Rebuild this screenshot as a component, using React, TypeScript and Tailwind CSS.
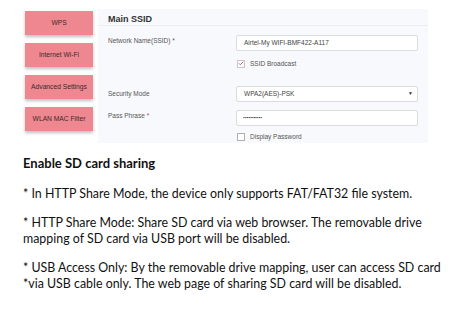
import { Check } from 'lucide-react';

const menu = ['WPS', 'Internet Wi-Fi', 'Advanced Settings', 'WLAN MAC Filter'];

const notes = [
  ['* In HTTP Share Mode, the device only supports FAT/FAT32 file system.'],
  [
    '* HTTP Share Mode: Share SD card via web browser. The removable drive',
    'mapping of SD card via USB port will be disabled.',
  ],
  [
    '* USB Access Only: By the removable drive mapping, user can access SD card',
    '*via USB cable only. The web page of sharing SD card will be disabled.',
  ],
];

export default function App() {
  return (
    <div className="w-[474px] h-[315px] bg-white overflow-hidden">
      {/* Router settings screenshot */}
      <div className="flex pt-[9px] pl-[25px]">
        <div className="flex flex-col gap-[8px] pt-[2px]">
          {menu.map((m) => (
            <div
              key={m}
              className="w-[68px] h-[24px] bg-[#ef8790] flex items-center justify-center text-[6.7px] text-[#3a2a2c] shadow-[0_2px_3px_rgba(0,0,0,0.25)]"
              style={{ fontFamily: '"Liberation Sans", Arial, sans-serif' }}
            >
              {m}
            </div>
          ))}
        </div>

        <div
          className="ml-[5px] w-[330px] h-[134px] bg-[#f8f9fd] text-[#555]"
          style={{ fontFamily: '"Liberation Sans", Arial, sans-serif' }}
        >
          <div className="h-[17px] border-b border-[#eceef3] flex items-center pl-[10px] pt-[6px] text-[9px] font-bold text-[#333]">
            Main SSID
          </div>

          <div className="flex flex-col pl-[10px] pr-[10px] pt-[9px] text-[6.5px]">
            <div className="flex">
              <div className="w-[128px] pt-[1px]">Network Name(SSID) *</div>
              <div className="flex-1 h-[16px] bg-white border border-[#dcdcdc] rounded-[2px] flex items-center pl-[7px] text-[#444]">
                Airtel-My WIFI-BMF422-A117
              </div>
            </div>
            <div className="flex items-center ml-[129px] mt-[8px] gap-[5px]">
              <div className="w-[8px] h-[8px] border border-[#c8c8c8] bg-white flex items-center justify-center">
                <Check className="w-[7px] h-[7px] text-[#c03040]" strokeWidth={3} />
              </div>
              <span>SSID Broadcast</span>
            </div>

            <div className="flex items-center mt-[17px]">
              <div className="w-[128px]">Security Mode</div>
              <div className="flex-1 h-[16px] bg-white border border-[#dcdcdc] rounded-[2px] flex items-center justify-between pl-[7px] pr-[4px] text-[#444]">
                <span>WPA2(AES)-PSK</span>
                <span className="text-[5px] text-[#333]">▼</span>
              </div>
            </div>

            <div className="flex mt-[8px]">
              <div className="w-[128px] pt-[1px]">
                Pass Phrase <span className="text-[#d03040]">*</span>
              </div>
              <div className="flex-1 h-[16px] bg-white border border-[#dcdcdc] rounded-[2px] flex items-center pl-[6px] text-[#222] text-[7px] font-bold tracking-[-0.6px]">
                ···········
              </div>
            </div>
            <div className="flex items-center ml-[129px] mt-[6px] gap-[5px]">
              <div className="w-[8px] h-[8px] border border-[#b0b0b0] bg-white" />
              <span>Display Password</span>
            </div>
          </div>
        </div>
      </div>

      {/* Notes */}
      <div
        className="pl-[23px] pt-[12px] text-[12.4px] leading-[16px] text-[#111]"
        style={{ fontFamily: 'Lato, "Open Sans", sans-serif' }}
      >
        <div className="font-bold text-[13px]">Enable SD card sharing</div>
        <div className="flex flex-col gap-[13px] mt-[15px]">
          {notes.map((n, i) => (
            <div key={i}>
              {n.map((l) => (
                <div key={l}>{l}</div>
              ))}
            </div>
          ))}
        </div>
      </div>
    </div>
  );
}
